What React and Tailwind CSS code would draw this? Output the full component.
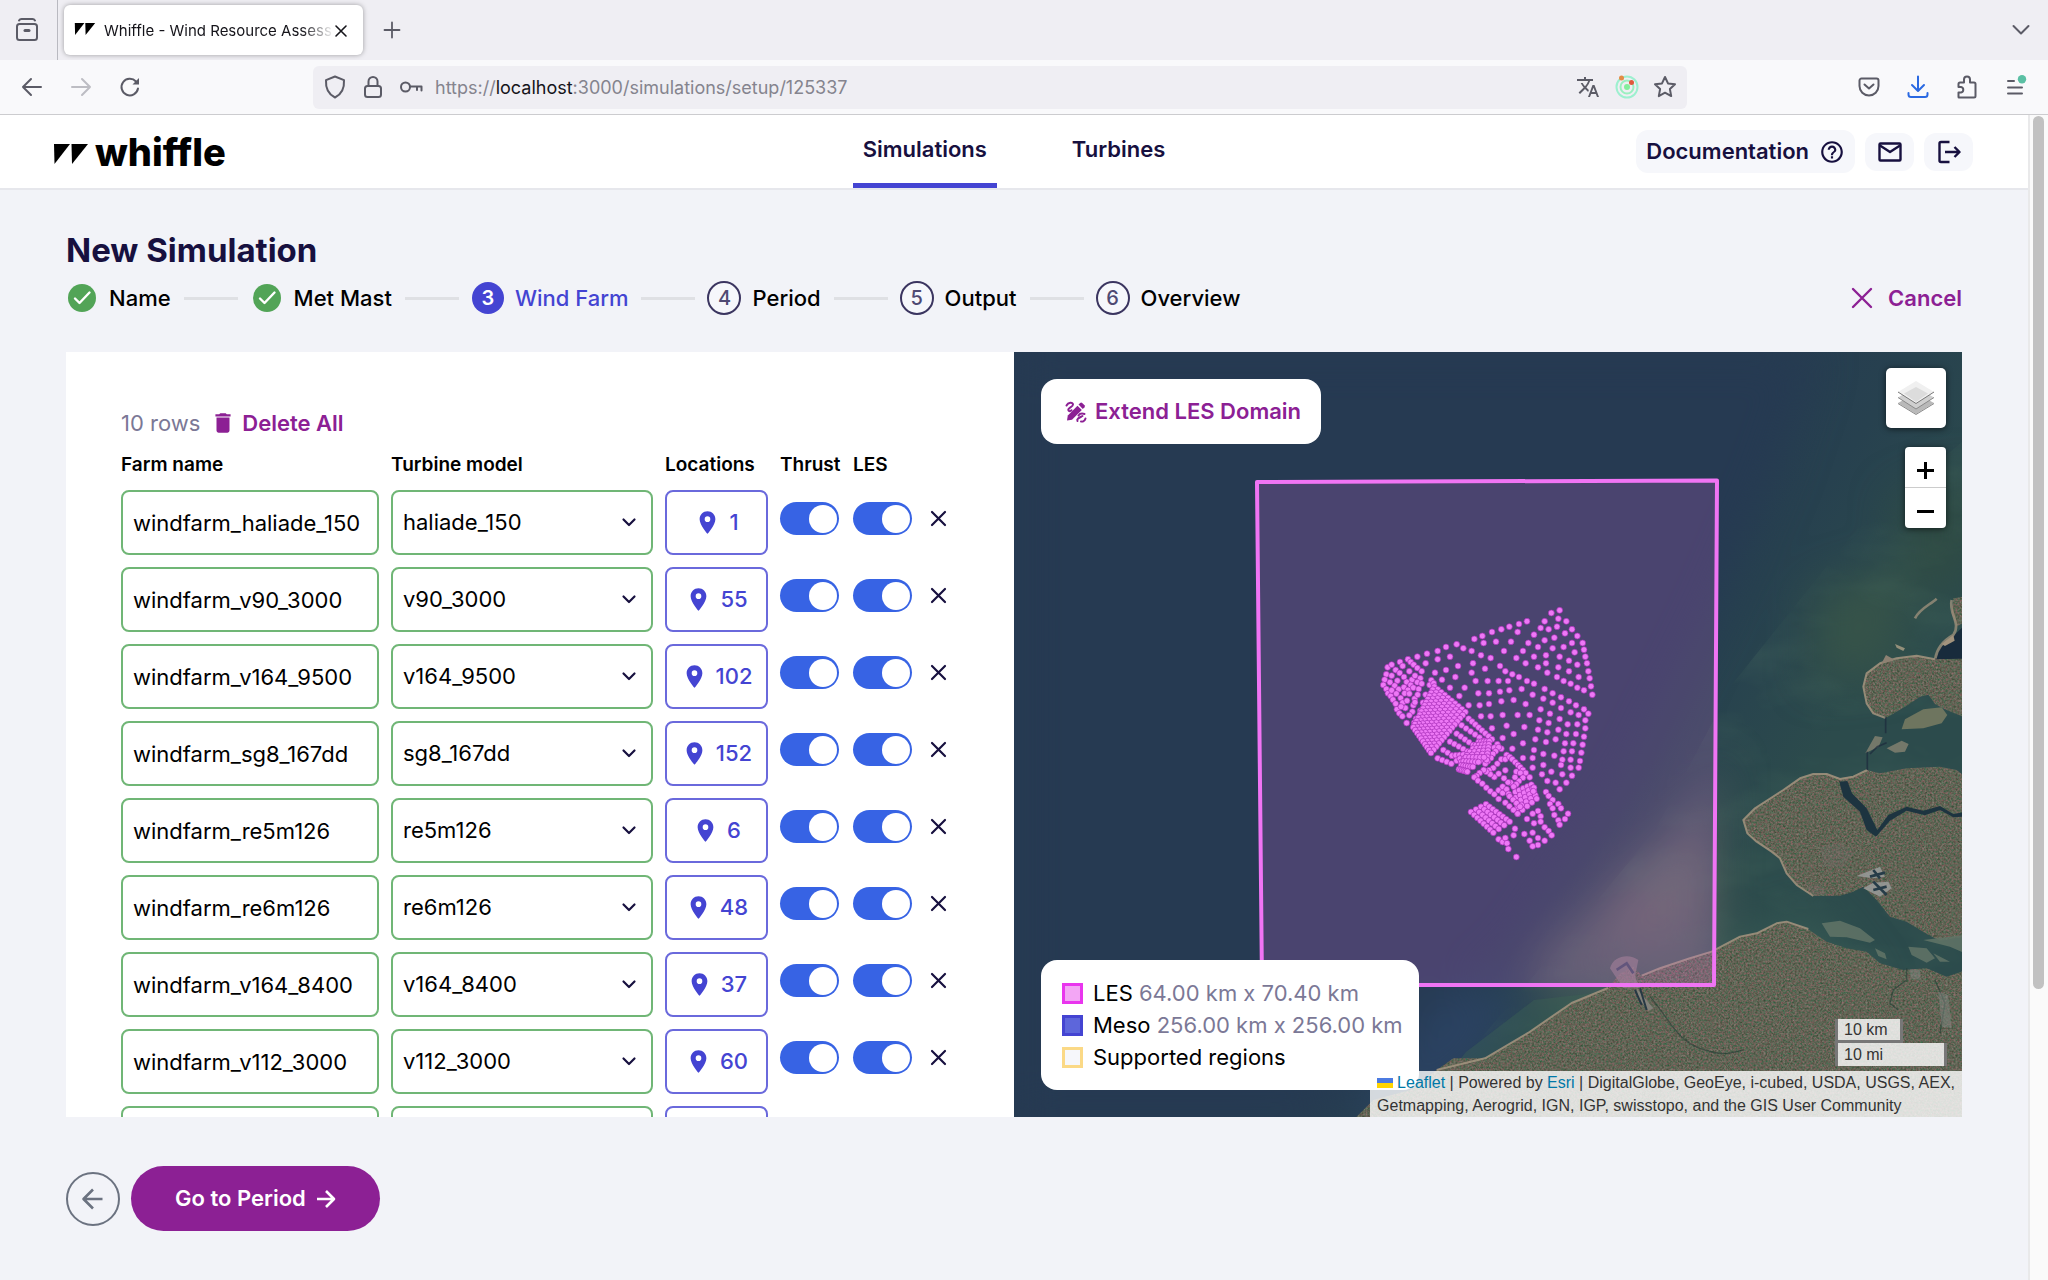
import React from "react";
import { MdDelete, MdLocationOn, MdTranslate, MdHelpOutline } from "react-icons/md";

const farms = [
  { name: "windfarm_haliade_150", model: "haliade_150", count: "1" },
  { name: "windfarm_v90_3000", model: "v90_3000", count: "55" },
  { name: "windfarm_v164_9500", model: "v164_9500", count: "102" },
  { name: "windfarm_sg8_167dd", model: "sg8_167dd", count: "152" },
  { name: "windfarm_re5m126", model: "re5m126", count: "6" },
  { name: "windfarm_re6m126", model: "re6m126", count: "48" },
  { name: "windfarm_v164_8400", model: "v164_8400", count: "37" },
  { name: "windfarm_v112_3000", model: "v112_3000", count: "60" },
  { name: "", model: "", count: "" },
];

const steps = [
  { label: "Name", state: "done" },
  { label: "Met Mast", state: "done" },
  { label: "Wind Farm", state: "current" },
  { label: "Period", state: "todo" },
  { label: "Output", state: "todo" },
  { label: "Overview", state: "todo" },
];

function Svg({ size = 24, w, h, sw = 2, children, className }) {
  return (
    <svg
      width={w || size}
      height={h || size}
      viewBox={`0 0 ${w || size} ${h || size}`}
      fill="none"
      stroke="currentColor"
      strokeWidth={sw}
      strokeLinecap="round"
      strokeLinejoin="round"
      className={className}
      aria-hidden="true"
    >
      {children}
    </svg>
  );
}

function BrandMark({ className }) {
  return (
    <svg viewBox="0 0 34 20" className={className} fill="currentColor" aria-hidden="true">
      <path d="M0 0H16L0.5 20Z" />
      <path d="M17.5 0H34L18 20Z" />
    </svg>
  );
}

function TabStrip() {
  return (
    <div className="flex h-[60px] shrink-0 items-center bg-[#efeef3] text-[#5b5b66]">
      <button aria-label="Recent windows" className="flex h-full w-[58px] items-center justify-center border-r border-[#b9b9c0] pr-1">
        <Svg size={24}>
          <path d="M4 2.5c.6-1 1.300-1.500 2.500-1.500h11c1.200 0 1.900.500 2.500 1.500" />
          <rect x="2" y="6" width="20" height="16" rx="2.500" />
          <path d="M10 12.500h4" strokeWidth="3" />
        </Svg>
      </button>
      <div className="ml-[6px] flex h-[50px] w-[299px] items-center rounded-md bg-white pl-[10px] pr-[15px] pt-[2px] shadow-[0_0_5px_rgba(0,0,0,0.35)]">
        <BrandMark className="mb-1 h-3 w-[22px] shrink-0 text-black" />
        <span className="ml-2 flex-1 whitespace-nowrap text-[15px] text-[#15141a] [mask-image:linear-gradient(to_right,black_86%,transparent)]">
          Whiffle - Wind Resource Assess
        </span>
        <button aria-label="Close tab" className="text-[#15141a]">
          <Svg size={14} sw={1.6}><path d="M2 2l10 10M12 2L2 12" /></Svg>
        </button>
      </div>
      <button aria-label="New tab" className="ml-5">
        <Svg size={18} sw={1.8}><path d="M9 1.500v15M1.500 9h15" /></Svg>
      </button>
      <button aria-label="List all tabs" className="ml-auto mr-[18px]">
        <Svg size={18} sw={2}><path d="M1.500 5l7.500 7.500L16.500 5" /></Svg>
      </button>
    </div>
  );
}

function Toolbar() {
  return (
    <div className="flex h-[55px] shrink-0 items-center border-b border-[#cccccf] bg-[#f9f9fb] text-[#5b5b66]">
      <button aria-label="Back" className="ml-[21px]">
        <Svg size={22}><path d="M2 11h18M10 3l-8 8 8 8" /></Svg>
      </button>
      <button aria-label="Forward" className="ml-[27px] text-[#bdbdc3]">
        <Svg size={22}><path d="M2 11h18M12 3l8 8-8 8" /></Svg>
      </button>
      <button aria-label="Reload" className="ml-[27px]">
        <Svg size={22}>
          <path d="M19 12.500A8.300 8.300 0 1 1 17 5.500" />
          <path d="M20 2v6.500h-6.500z" fill="currentColor" stroke="none" />
        </Svg>
      </button>
      <div className="ml-[172px] flex h-[43px] min-w-0 flex-1 items-center rounded-md bg-[#efeef3] pr-[10px] text-[#5b5b66]">
        <Svg size={24} className="ml-[10px]">
          <path d="M12 1.500l9 3.700c.5 8-2.500 14-9 17.300C5.500 19.200 2.500 13.200 3 5.200z" />
        </Svg>
        <Svg size={24} className="ml-[14px]">
          <rect x="4" y="11" width="16" height="11" rx="2.500" />
          <path d="M7.500 11V6.500a4.500 4.500 0 0 1 9 0V11" />
        </Svg>
        <Svg size={24} className="ml-[14px]" sw={2}>
          <circle cx="6.500" cy="12" r="4.500" />
          <path d="M11 11.500h11.500v4M18 12v3" />
        </Svg>
        <span className="ml-3 flex-1 truncate pt-[2px] text-lg text-[#85848e]">
          https://<span className="text-[#15141a]">localhost</span>:3000/simulations/setup/125337
        </span>
        <button aria-label="Translate page"><MdTranslate className="size-6" /></button>
        <button aria-label="Extension" className="ml-[15px]">
          <Svg size={24} sw={2}>
            <circle cx="12" cy="12" r="10.500" stroke="#9df0cf" />
            <circle cx="12" cy="12" r="6.500" stroke="#9af0c0" />
            <circle cx="12" cy="12" r="3" fill="#83ee9c" stroke="none" />
            <circle cx="6.500" cy="3" r="2.500" fill="#e38b45" stroke="none" />
            <circle cx="16.500" cy="7.500" r="2.500" fill="#e0593c" stroke="none" />
          </Svg>
        </button>
        <button aria-label="Bookmark" className="ml-[14px]">
          <Svg size={24} sw={2}>
            <path d="M12 2l3 6.400 7 .9-5.100 4.800 1.300 7-6.200-3.400-6.200 3.400 1.300-7L2 9.300l7-.9z" />
          </Svg>
        </button>
      </div>
      <div className="ml-[170px] flex items-center gap-[25px] pr-5">
        <button aria-label="Pocket">
          <Svg size={24} sw={2}>
            <path d="M4.500 3.500h15a2 2 0 0 1 2 2V11a9.500 9.500 0 0 1-19 0V5.500a2 2 0 0 1 2-2z" />
            <path d="M7.500 9.500l4.500 4 4.500-4" />
          </Svg>
        </button>
        <button aria-label="Downloads" className="text-[#2a69e2]">
          <Svg size={24} sw={2}>
            <path d="M12 1.500v14M6 10l6 6 6-6M2.500 18v1.500a2.500 2.500 0 0 0 2.500 2.500h14a2.500 2.500 0 0 0 2.500-2.500V18" />
          </Svg>
        </button>
        <button aria-label="Extensions">
          <Svg size={24} sw={2}>
            <path d="M4 22.500h15a1.500 1.500 0 0 0 1.500-1.500V9A1.500 1.500 0 0 0 19 7.500h-4V4.500a3 3 0 0 0-6 0v3H5A1.500 1.500 0 0 0 3.500 9v3H6a2.800 2.800 0 0 1 0 5.500H3.500V22a.5.5 0 0 0 .5.500z" />
          </Svg>
        </button>
        <button aria-label="Application menu">
          <Svg size={24} sw={2}>
            <path d="M4 6h6M4 12.500h14M4 18.500h14" />
            <circle cx="18" cy="4.200" r="4.200" fill="#5bc0a4" stroke="none" />
          </Svg>
        </button>
      </div>
    </div>
  );
}

function SiteHeader() {
  return (
    <header className="grid h-[75px] shrink-0 grid-cols-[1fr_auto_1fr] border-b-2 border-[#e6e7ec] bg-white text-[22px] font-semibold text-[#17103f]">
      <a href="#home" aria-label="whiffle" className="flex items-center gap-[7px] pl-[54px] text-black">
        <BrandMark className="mt-1 h-5 w-[34px]" />
        <span className="text-[38px] font-extrabold leading-none">whiffle</span>
      </a>
      <nav className="flex gap-[65px]">
        <a href="#simulations" className="border-b-[5px] border-[#4444d2] px-[10px] pt-[19px] leading-[30px]">Simulations</a>
        <a href="#turbines" className="px-[10px] pt-[19px] leading-[30px]">Turbines</a>
      </nav>
      <div className="flex items-center justify-end gap-[10px] pr-[55px]">
        <a href="#docs" className="flex h-[43px] items-center gap-[10px] rounded-xl bg-[#f6f7fb] px-[10px]">
          Documentation
          <MdHelpOutline className="size-[26px]" />
        </a>
        <button aria-label="Contact" className="flex h-[38px] w-[49px] items-center justify-center rounded-xl bg-[#f6f7fb]">
          <svg width="24" height="20" viewBox="0 0 24 20" fill="none" stroke="currentColor" strokeWidth="2.400" strokeLinejoin="round" aria-hidden="true">
            <rect x="1.500" y="1.500" width="21" height="17" rx="1" />
            <path d="M2 3.500l10 6.500 10-6.500" />
          </svg>
        </button>
        <button aria-label="Log out" className="flex h-[38px] w-[49px] items-center justify-center rounded-xl bg-[#f6f7fb]">
          <svg width="24" height="24" viewBox="0 0 24 24" fill="none" stroke="currentColor" strokeWidth="2.400" strokeLinejoin="round" aria-hidden="true">
            <path d="M12.500 2H4a1.500 1.500 0 0 0-1.500 1.500v17A1.500 1.500 0 0 0 4 22h8.500" />
            <path d="M8 12h14M17.500 7l5 5-5 5" />
          </svg>
        </button>
      </div>
    </header>
  );
}

function StepBadge({ state, number }) {
  if (state === "done") {
    return (
      <span className="ml-[2px] flex size-7 items-center justify-center rounded-full bg-[#52a457] text-white">
        <Svg size={20} sw={2.4}><path d="M3 10.500l4.500 4.500L17.500 4.500" /></Svg>
      </span>
    );
  }
  if (state === "current") {
    return (
      <span className="flex size-8 items-center justify-center rounded-full bg-[#4444d2] text-xl font-semibold text-white">{number}</span>
    );
  }
  return (
    <span className="-ml-px flex size-[34px] items-center justify-center rounded-full border-2 border-[#3b3560] bg-[#f6f7fb] text-xl font-medium text-[#4f4a73]">{number}</span>
  );
}

function Stepper() {
  return (
    <ol className="flex items-center text-[22px] font-medium leading-[34px] text-black">
      {steps.map((s, i) => (
        <li key={s.label} className="flex items-center">
          <StepBadge state={s.state} number={i + 1} />
          <span className={s.state === "current" ? "ml-[11px] text-[#4444d2]" : s.state === "done" ? "ml-[13px]" : "ml-[11px]"}>{s.label}</span>
          {i < steps.length - 1 && <span className="mx-[13px] h-[3px] w-[54px] bg-[#dfe0e4]" />}
        </li>
      ))}
    </ol>
  );
}

const toggleClass =
  "mt-3 flex h-[33px] w-[59px] appearance-none items-center justify-end rounded-full bg-[#3763e4] px-[2px] before:block before:size-7 before:rounded-full before:bg-white before:content-['']";

function FarmTable() {
  return (
    <section className="w-1/2 overflow-hidden bg-white pl-[55px] pr-10 pt-[55px]">
      <div className="flex h-8 items-center text-[22px] text-[#7b7896]">
        10 rows
        <button className="ml-[10px] flex items-center gap-[6px] font-semibold text-[#8c2094]">
          <MdDelete className="size-[26px]" />
          Delete All
        </button>
      </div>
      <table className="mt-[11px] w-full table-fixed border-collapse text-left text-black">
        <colgroup>
          <col className="w-[270px]" />
          <col className="w-[274px]" />
          <col className="w-[115px]" />
          <col className="w-[73px]" />
          <col className="w-[73px]" />
          <col />
        </colgroup>
        <thead>
          <tr className="text-[19px] font-semibold leading-[30px]">
            <th scope="col" className="pb-[10px] font-semibold">Farm name</th>
            <th scope="col" className="pb-[10px] font-semibold">Turbine model</th>
            <th scope="col" className="pb-[10px] font-semibold">Locations</th>
            <th scope="col" className="pb-[10px] font-semibold">Thrust</th>
            <th scope="col" className="pb-[10px] font-semibold">LES</th>
            <th scope="col" className="pb-[10px]" aria-label="Remove" />
          </tr>
        </thead>
        <tbody>
          {farms.map((f, i) => (
            <tr key={i} className="align-top text-[22px]">
              <td className="pb-3 pr-3">
                <input
                  aria-label="Farm name"
                  defaultValue={f.name}
                  className="block h-[65px] w-full rounded-lg border-2 border-[#70b676] bg-white px-[10px]"
                />
              </td>
              <td className="pb-3 pr-3">
                <div className="relative">
                  <select
                    aria-label="Turbine model"
                    className="block h-[65px] w-full appearance-none rounded-lg border-2 border-[#70b676] bg-white px-[10px]"
                  >
                    <option>{f.model}</option>
                  </select>
                  <Svg size={16} sw={2.2} className="pointer-events-none absolute right-4 top-6 text-[#17103f]">
                    <path d="M2.500 5.500l5.500 5.500 5.500-5.500" />
                  </Svg>
                </div>
              </td>
              <td className="pb-3 pr-3">
                <button className="flex h-[65px] w-full items-center justify-center gap-2 rounded-lg border-2 border-[#6a69dc] font-medium text-[#4444d2]">
                  <MdLocationOn className="size-[27px]" />
                  {f.count}
                </button>
              </td>
              <td><input type="checkbox" defaultChecked aria-label="Thrust" className={toggleClass} /></td>
              <td><input type="checkbox" defaultChecked aria-label="LES" className={toggleClass} /></td>
              <td>
                <button aria-label="Remove farm" className="ml-1 mt-5 block text-[#17103f]">
                  <Svg size={17} sw={2.2}><path d="M2 2l13 13M15 2L2 15" /></Svg>
                </button>
              </td>
            </tr>
          ))}
        </tbody>
      </table>
    </section>
  );
}

/* Individual turbine positions, in thirds of a map unit. */
const scattered = [
  [599, 61], [574, 69], [595, 86], [554, 94], [619, 94], [591, 110], [542, 114], [566, 118], [636, 118], [615, 130], [522, 134], [652, 138],
  [583, 143], [554, 151], [505, 159], [636, 159], [668, 159], [534, 171], [611, 171], [578, 175], [672, 179], [489, 183], [644, 187], [558, 196],
  [522, 200], [599, 200], [676, 200], [469, 204], [627, 212], [497, 220], [558, 220], [681, 220], [652, 224], [534, 232], [595, 232], [685, 244],
  [627, 244], [562, 248], [656, 261], [591, 261], [689, 265], [611, 273], [632, 281], [693, 289], [652, 293], [672, 301], [697, 314], [501, 94],
  [477, 102], [448, 110], [424, 118], [396, 126], [473, 126], [367, 138], [343, 147], [371, 159], [408, 155], [453, 155], [432, 183], [290, 163],
  [258, 171], [310, 175], [233, 183], [335, 183], [201, 191], [363, 196], [172, 200], [270, 200], [392, 204], [233, 208], [197, 220], [339, 220],
  [294, 228], [420, 228], [375, 236], [258, 240], [436, 244], [225, 248], [335, 248], [457, 253], [286, 261], [477, 261], [246, 269], [347, 273],
  [383, 273], [416, 273], [444, 273], [501, 273], [522, 281], [270, 293], [314, 293], [485, 297], [554, 297], [448, 301], [420, 305], [355, 310],
  [387, 310], [578, 310], [518, 314], [298, 318], [603, 322], [550, 326], [461, 330], [424, 334], [627, 334], [578, 338], [387, 342], [497, 342],
  [326, 346], [359, 346], [648, 346], [603, 354], [542, 358], [672, 358], [632, 367], [570, 371], [685, 371], [656, 375], [363, 379], [392, 379],
  [428, 375], [473, 375], [509, 375], [599, 387], [538, 391], [676, 391], [566, 399], [623, 403], [652, 403], [440, 407], [493, 411], [676, 415],
  [396, 415], [534, 419], [595, 419], [562, 427], [619, 432], [648, 432], [461, 432], [672, 440], [428, 444], [526, 448], [587, 448], [558, 456],
  [615, 460], [640, 460], [489, 460], [668, 464], [457, 476], [424, 476], [522, 480], [611, 484], [636, 484], [664, 488], [550, 492], [583, 497],
  [489, 504], [518, 504], [607, 509], [632, 509], [660, 513], [550, 525], [603, 525], [518, 533], [632, 533], [656, 533], [574, 545], [546, 553],
  [607, 553], [636, 557], [562, 573], [587, 578], [619, 578], [599, 598], [558, 606], [566, 618], [578, 630], [570, 642], [595, 642], [578, 655],
  [603, 655], [624, 671], [583, 675], [615, 687], [595, 691], [599, 704], [534, 663], [518, 671], [542, 679], [501, 687], [522, 700], [542, 695],
  [554, 712], [566, 723], [575, 736], [518, 728], [493, 732], [534, 744], [509, 752], [554, 752], [534, 765], [518, 769], [465, 716], [461, 736],
  [416, 748], [428, 756], [436, 744], [441, 760], [445, 777], [469, 801], [83, 232], [95, 224], [120, 216], [144, 208], [152, 216], [161, 224],
  [172, 234], [185, 244], [79, 253], [74, 269], [70, 285], [79, 297], [84, 310], [92, 318], [99, 329], [107, 341], [111, 358], [118, 370],
  [127, 379], [140, 399], [128, 228], [107, 240], [119, 249], [132, 261], [148, 244], [95, 257], [112, 272], [90, 277], [104, 287], [116, 298],
  [95, 301], [109, 311], [122, 324], [128, 338], [136, 354], [140, 276], [132, 292], [156, 269], [152, 285], [165, 257], [181, 265], [172, 277],
  [185, 281], [144, 300], [160, 293], [176, 297], [134, 310], [148, 311], [164, 326], [173, 314], [141, 332], [123, 350], [160, 346], [165, 337],
  [157, 365], [148, 376], [197, 314], [189, 338], [181, 362], [168, 386], [163, 398], [214, 271], [209, 285], [221, 280], [412, 463], [403, 473],
  [416, 472], [407, 484], [399, 492], [393, 504], [383, 514], [376, 521], [436, 541], [403, 561], [416, 551], [412, 521], [424, 508], [440, 495],
  [436, 508], [449, 501], [457, 508], [466, 517], [474, 525], [481, 532], [489, 540], [497, 549], [509, 562], [469, 545], [481, 549], [489, 563],
  [477, 573], [465, 562], [452, 578], [469, 583], [461, 590], [444, 577], [432, 565], [400, 534], [387, 541], [391, 553], [379, 545], [371, 540],
  [359, 549], [350, 558], [343, 562], [354, 572], [367, 581], [379, 593], [391, 604], [403, 613], [416, 627], [416, 601], [428, 609], [428, 590],
  [440, 598], [446, 612],
];

function line([x1, y1], [x2, y2], n) {
  return Array.from({ length: n }, (_, i) => {
    const t = n === 1 ? 0 : i / (n - 1);
    return [x1 + (x2 - x1) * t, y1 + (y2 - y1) * t];
  });
}

function quad(a, b, c, d, cols, rows) {
  const left = line(a, d, rows);
  const right = line(b, c, rows);
  return left.flatMap((p, i) => line(p, right[i], cols));
}

const turbines = [
  ...scattered,
  ...quad([223, 290], [316, 366], [213, 489], [160, 412], 10, 14),
  ...line([326, 386], [396, 448], 8),
  ...line([305, 406], [372, 452], 6),
  ...line([290, 431], [352, 474], 6),
  ...line([270, 455], [336, 492], 6),
  ...line([250, 480], [276, 497], 3),
  ...line([233, 505], [274, 521], 4),
  ...line([276, 497], [310, 494], 4),
  ...line([290, 512], [300, 506], 2),
  ...quad([356, 456], [388, 454], [380, 510], [304, 516], 5, 7),
  ...quad([318, 502], [372, 502], [322, 545], [297, 538], 6, 4),
  ...quad([466, 606], [514, 584], [530, 626], [473, 671], 5, 5),
  ...line([436, 638], [473, 671], 4),
  ...line([449, 619], [480, 650], 4),
  ...line([522, 593], [520, 604], 2),
  ...quad([378, 643], [449, 695], [400, 728], [333, 666], 8, 4),
];

const walcheren =
  "M310 660L345 625 430 570 480 535 520 522 560 522 600 535 640 528 680 510 720 520 800 505 900 500 950 510 975 530V1010L900 1022 860 1002 800 965 750 950 710 900 670 860 640 875 600 887 520 888 470 855 440 820 420 775 395 755 350 725 322 700Z";
const goeree =
  "M670 260L680 220 720 190 770 175 830 167 885 178 975 176V352L920 330 885 312 865 284 840 290 800 317 742 352 700 340 680 310Z";
const flanders =
  "M-800 1500L-690 1470 -610 1410 -560 1375 -465 1375 -336 1299 -205 1209 -96 1164 -60 1120 -20 1100 5 1127 60 1105 150 1075 215 1055 300 1010 350 1000 410 970 440 965 500 985 560 1025 620 1045 680 1055 720 1090 790 1110 860 1105 920 1130 975 1112V1600H-900Z";

function SatelliteMap() {
  return (
    <svg className="absolute inset-0 size-full" viewBox="0 0 948 765" preserveAspectRatio="xMaxYMax slice" role="img" aria-label="Satellite map of the wind farm area">
      <defs>
        <filter id="land" x="-5%" y="-5%" width="110%" height="110%" colorInterpolationFilters="sRGB">
          <feTurbulence type="fractalNoise" baseFrequency="0.17" numOctaves="3" seed="7" />
          <feColorMatrix values="0.5 0 0 0 0.13  0.1 0.22 0 0 0.23  0.25 0.15 0 0 0.13  0 0 0 0 1" />
          <feComposite in2="SourceAlpha" operator="in" />
        </filter>
        <filter id="haze" filterUnits="userSpaceOnUse" x="0" y="-50" width="1100" height="900" colorInterpolationFilters="sRGB">
          <feGaussianBlur stdDeviation="22" />
        </filter>
        <filter id="wisps" filterUnits="userSpaceOnUse" x="300" y="0" width="648" height="765" colorInterpolationFilters="sRGB">
          <feTurbulence type="fractalNoise" baseFrequency="0.01 0.022" numOctaves="4" seed="12" />
          <feColorMatrix values="0 0 0 0 0.3  0 0 0 0 0.44  0 0 0 0 0.38  1.8 0 0 0 -0.75" />
          <feComposite in2="SourceGraphic" operator="in" />
        </filter>
        <linearGradient id="deep" gradientUnits="userSpaceOnUse" x1="500" y1="300" x2="760" y2="470">
          <stop offset="0" stopColor="#263a52" />
          <stop offset="0.55" stopColor="#27414f" />
          <stop offset="1" stopColor="#2c4b4c" />
        </linearGradient>
      </defs>
      <rect width="948" height="765" fill="#263a52" />
      <rect width="948" height="765" fill="url(#deep)" />
      <g filter="url(#haze)">
        <path d="M560 0H800L760 120 700 260 620 420 500 600 300 765H0V0Z" fill="#263a52" />
        <path d="M480 765L560 660 700 600 800 560 860 640 700 765Z" fill="#375a54" />
        <path d="M690 440L710 400 700 520 700 630 560 640 520 655 530 600 600 540Z" fill="#646b68" opacity="0.6" />
        <path d="M600 530L700 490 700 570 590 600Z" fill="#83756a" opacity="0.25" />
        <path d="M430 640L520 640 460 720 400 770H340Z" fill="#2b4262" />
        <path d="M800 240L900 210 880 320 800 330Z" fill="#365349" />
        <path d="M880 150L960 120V230L900 240Z" fill="#2f4b44" />
      </g>
      <path d="M948 90L840 180 720 330 640 480 540 600 400 765H948Z" fill="#fff" filter="url(#wisps)" opacity="0.28" />
      <path d="M400 765L452 700 520 648 590 640 520 700 455 765Z" fill="#3e6654" opacity="0.35" />
      <g transform="translate(626 248) scale(0.3333)">
        <path d="M940 -5L975 -10V65L950 80 935 40Z" fill="#556" filter="url(#land)" />
        <path d="M885 178L900 145 975 75V180Z" fill="#182b3c" />
        <path d="M825 55C840 25 870 15 890 -4M935 0C925 40 965 70 940 105 905 125 890 150 886 176" fill="none" stroke="#a2937d" strokeWidth="8" opacity="0.75" />
        <path d="M905 132L940 105 944 122 915 138Z" fill="#a2937d" />
        <path d="M765 132L795 145 790 153 770 143Z" fill="#94907a" />
        <g filter="url(#land)" fill="#556">
          <path d={goeree} />
          <path d={walcheren} />
          <path d={flanders} />
        </g>
        <g fill="none" stroke="#a3947f" strokeWidth="6" strokeLinejoin="round" opacity="0.85">
          <path d="M737 354L700 340 680 310 670 260 680 220 720 190 770 175 830 167 885 178" />
          <path d="M520 888L470 855 440 820 420 775 395 755 350 725 322 700 310 660 345 625 430 570 480 535 520 522 560 522 600 537 640 530 682 510" />
          <path d="M-610 1410L-465 1375 -336 1299 -205 1209 -96 1164M5 1127L60 1105 150 1075 215 1055 300 1010 350 1000 410 970 440 965 505 987" />
        </g>
        <path d="M725 190L738 165 765 180Z" fill="#8d8172" />
        <path d="M785 388L795 358 850 328 905 322 922 345 905 370 850 385Z" fill="#6e755f" />
        <path d="M676 460L705 408 728 412 716 440ZM740 445L785 422 806 432 795 455 765 458Z" fill="#74786a" />
        <path d="M690 462L712 440 740 428M682 455V510M737 352V400" stroke="#1d2a3c" strokeWidth="5" fill="none" opacity="0.7" />
        <path d="M598 545L622 543 636 580 680 625 700 665 712 690 745 645 800 620 850 632 900 618 940 642 975 636V650L940 652 900 630 855 646 800 632 750 662 708 710 680 690 660 635 610 590Z" fill="#1d3440" />
        <path d="M545 970L600 962 660 985 705 1020 690 1028 620 1012 570 1010ZM705 1045L735 1060 740 1078 715 1068ZM805 1040L860 1045 885 1075 860 1088 815 1065ZM880 1060L930 1085 900 1085ZM850 1020L975 1005V1060L930 1040Z" fill="#627467" opacity="0.85" />
        <path d="M650 828L690 812 720 800 735 830 700 835ZM670 865L700 848 745 845 755 865 720 890Z" fill="#9a9c9b" opacity="0.85" />
        <path d="M690 830L735 818M700 870L740 860M700 845L740 885M700 810L720 835" stroke="#263c48" strokeWidth="8" />
        <path d="M540 740L600 730 640 760 610 800 550 800ZM500 860L540 850 560 885 520 888Z" fill="#746d69" opacity="0.3" />
        <path d="M-90 1105C-80 1065 -30 1060 -5 1080L-15 1130 0 1165 -50 1165Z" fill="#8a7d82" opacity="0.7" />
        <path d="M-70 1110L-40 1090 -20 1120" fill="none" stroke="#444f62" strokeWidth="8" />
        <path d="M-10 1165L40 1225 25 1232 -5 1195Z" fill="#82817a" />
        <path d="M0 1165L20 1230M-15 1170L5 1215" stroke="#263844" strokeWidth="6" />
        <path d="M30 1190C90 1260 110 1320 180 1345S270 1360 310 1350M800 1140L760 1170 750 1210 775 1230M885 1140L915 1210 900 1300M800 1105V1140" stroke="#233d36" strokeWidth="4" fill="none" opacity="0.6" />
        <path d="M810 1108L840 1110 842 1140 812 1135ZM895 1175L925 1185 935 1285 905 1280Z" fill="#7e8680" opacity="0.5" />
      </g>
      <path d="M243 130L703 128.500 700 633 248 633Z" fill="#f074f4" fillOpacity="0.18" stroke="#f074f4" strokeWidth="4" strokeLinejoin="round" />
      <g transform="translate(346 238) scale(0.3333)" fill="#ee78f6" stroke="#a22bb4" strokeWidth="2">
        {turbines.map(([x, y], i) => (
          <circle key={i} cx={x} cy={y} r="9" />
        ))}
      </g>
    </svg>
  );
}

function LegendItem({ swatch, label, size }) {
  return (
    <li className="flex items-center gap-[10px]">
      <span className={swatch} />
      <span>
        {label} {size && <span className="text-[#7b7896]">{size}</span>}
      </span>
    </li>
  );
}

function MapPanel() {
  return (
    <section className="relative w-1/2 overflow-hidden bg-[#263a52]">
      <SatelliteMap />
      <button className="absolute left-[27px] top-[27px] flex h-[65px] items-center gap-2 rounded-2xl bg-white pl-6 pr-5 text-[22px] font-semibold text-[#8c2094]">
        <svg width="22" height="22" viewBox="0 0 22 22" fill="none" stroke="currentColor" strokeWidth="2" strokeLinecap="round" aria-hidden="true">
          <path d="M2 19.500l.8-5L12.500 4.700l4.300 4.300L7 18.800z" fill="currentColor" stroke="none" />
          <path d="M13.500 3.600l1.700-1.700q1-.8 2 0l2.300 2.300q.8 1 0 2l-1.700 1.700z" fill="currentColor" stroke="none" />
          <path d="M1.500 4.500C3 1.500 8 .800 8 3.500S2 7 3.500 9.500c.700 1.200 2 .500 3-.300M19.500 13c-3-1-5 0-6 1.500M12.500 20c-1.500-2.500 3.500-4 5-5M16 20.500c2 .500 4-1 4.500-3" />
        </svg>
        Extend LES Domain
      </button>
      <div className="absolute right-4 top-4 flex flex-col items-end gap-[19px]">
        <button aria-label="Layers" className="flex size-[60px] items-center justify-center rounded-[5px] bg-white shadow-[0_1px_6px_rgba(0,0,0,0.6)]">
          <svg width="36" height="36" viewBox="0 0 36 36" aria-hidden="true">
            <path d="M0 23L18 34 36 23 18 13Z" fill="#b9b9b9" />
            <path d="M0 23.500L18 34.500 36 23.500" fill="none" stroke="#8a8a8a" />
            <path d="M0 17.500L18 29 36 17.500 18 7Z" fill="#cfcfcf" />
            <path d="M0 17.500L18 29 36 17.500" fill="none" stroke="#8a8a8a" />
            <path d="M0 12L18 23.500 36 12 18 1Z" fill="#f0f0f0" />
            <path d="M6 13.500L18 7 30 13.500 18 22Z" fill="#dcdcdc" />
            <path d="M0 12L18 23.500 36 12" fill="none" stroke="#777" />
          </svg>
        </button>
        <div className="flex w-[41px] flex-col overflow-hidden rounded-[4px] bg-white text-black shadow-[0_1px_6px_rgba(0,0,0,0.6)]">
          <button aria-label="Zoom in" className="flex h-[41px] items-center justify-center border-b border-[#ccc] pt-[6px]">
            <svg width="17" height="17" viewBox="0 0 17 17" stroke="currentColor" strokeWidth="3" aria-hidden="true"><path d="M0 8.500h17M8.500 0v17" /></svg>
          </button>
          <button aria-label="Zoom out" className="flex h-10 items-center justify-center pt-[6px]">
            <svg width="17" height="17" viewBox="0 0 17 17" stroke="currentColor" strokeWidth="3" aria-hidden="true"><path d="M0 8.500h17" /></svg>
          </button>
        </div>
      </div>
      <ul className="absolute bottom-[27px] left-[27px] flex flex-col justify-center rounded-2xl bg-white py-[17px] pl-[21px] pr-4 text-[22px] leading-8 text-black">
        <LegendItem swatch="size-[21px] border-[3px] border-[#e935ee] bg-[#f3a6f5]" label="LES" size="64.00 km x 70.40 km" />
        <LegendItem swatch="size-[21px] border-[3px] border-[#4444d2] bg-[#5d66db]" label="Meso" size="256.00 km x 256.00 km" />
        <LegendItem swatch="size-[21px] border-[3px] border-[#fbd986] bg-[#f6f7fb]" label="Supported regions" />
      </ul>
      <div className="absolute bottom-[51px] right-[15px] flex w-[112px] flex-col items-start font-['Liberation_Sans',Arial,sans-serif] text-base leading-[21px] text-[#333]">
        <span className="w-[68px] border-x-[3px] border-b-[3px] border-[#777] bg-white/80 pl-[6px]">10 km</span>
        <span className="w-full border-x-[3px] border-[#777] bg-white/80 pl-[6px] leading-[23px]">10 mi</span>
      </div>
      <div className="absolute bottom-0 right-0 bg-white/80 px-[7px] font-['Liberation_Sans',Arial,sans-serif] text-base leading-[23px] text-[#333]">
        <svg className="mr-1 inline-block h-[10px] w-4 align-baseline" viewBox="0 0 16 10" aria-hidden="true">
          <path d="M0 0h16v5H0z" fill="#4c7be1" />
          <path d="M0 5h16v5H0z" fill="#ffd500" />
        </svg>
        <a href="#leaflet" className="text-[#0078a8]">Leaflet</a> | Powered by <a href="#esri" className="text-[#0078a8]">Esri</a> | DigitalGlobe, GeoEye, i-cubed, USDA, USGS, AEX,
        <br />
        Getmapping, Aerogrid, IGN, IGP, swisstopo, and the GIS User Community
      </div>
    </section>
  );
}

export default function App() {
  return (
    <div className="flex h-screen flex-col overflow-hidden bg-[#f2f3f8] font-['Inter',sans-serif]">
      <TabStrip />
      <Toolbar />
      <div className="flex min-h-0 flex-1">
        <div className="flex min-w-0 flex-1 flex-col">
          <SiteHeader />
          <main className="flex min-h-0 flex-1 flex-col px-[66px] pb-[49px] pt-10">
            <h1 className="text-[33px] font-bold leading-10 text-[#17103f]">New Simulation</h1>
            <div className="mt-[11px] flex items-center justify-between">
              <Stepper />
              <button className="flex items-center gap-[15px] text-[22px] font-semibold text-[#8c2094]">
                <Svg size={22} sw={2.4}><path d="M2 2l18 18M20 2L2 20" /></Svg>
                Cancel
              </button>
            </div>
            <div className="mt-[37px] flex min-h-0 flex-1">
              <FarmTable />
              <MapPanel />
            </div>
            <div className="mt-[49px] flex shrink-0 items-center gap-[11px]">
              <button aria-label="Back" className="flex size-[54px] items-center justify-center rounded-full border-2 border-[#6b7280] text-[#6b7280]">
                <Svg size={24} sw={2.6}><path d="M2.500 12h19M12 2.500L2.500 12l9.500 9.500" strokeLinecap="butt" /></Svg>
              </button>
              <button className="flex h-[65px] items-center gap-[10px] rounded-full bg-[#8c2094] px-11 text-[22px] font-semibold text-white">
                Go to Period
                <Svg size={20} sw={2.6}><path d="M1 10h17M10 2l8 8-8 8" strokeLinecap="butt" /></Svg>
              </button>
            </div>
          </main>
        </div>
        <div className="w-5 shrink-0 border-l-2 border-[#e9e9ea] bg-[#fafafa] pl-[3px] pt-px">
          <div className="h-3/4 w-[11px] rounded-full bg-[#c1c1c1]" />
        </div>
      </div>
    </div>
  );
}
